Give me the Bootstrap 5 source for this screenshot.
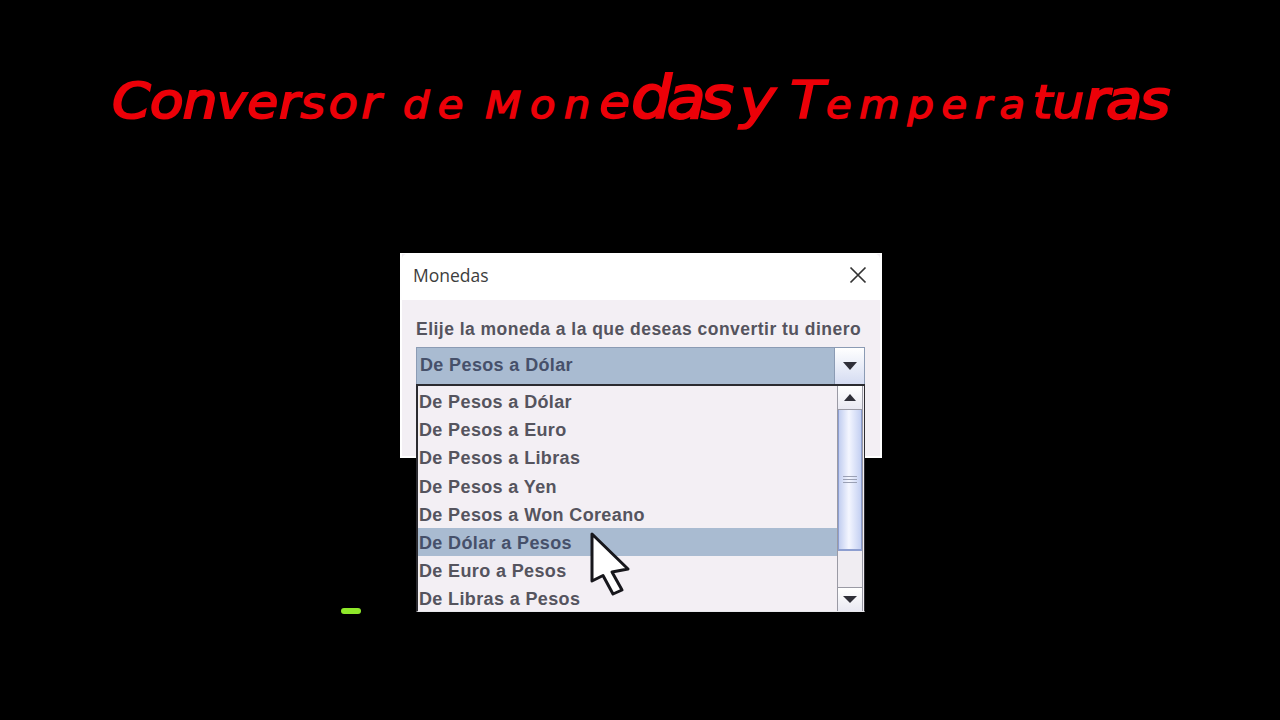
<!DOCTYPE html>
<html lang="es">
<head>
<meta charset="utf-8">
<title>Conversor</title>
<link href="https://cdn.jsdelivr.net/npm/bootstrap@5.3.0/dist/css/bootstrap.min.css" rel="stylesheet">
<style>
html,body{height:720px;overflow:hidden;background:#000;}
.stage{height:720px;position:relative;}
.headline{font-family:"DejaVu Sans",sans-serif;font-style:oblique;font-weight:400;-webkit-text-stroke:1.4px #ec0008;color:#ec0008;margin:0;height:253px;padding-top:66px;white-space:nowrap;line-height:64px;font-size:44px;text-align:center;}
.stretch{display:inline-block;transform:scaleX(1.095);transform-origin:center;}
.s1{font-size:50px;letter-spacing:-.5px;-webkit-text-stroke-width:2.2px}.s2{font-size:46px;letter-spacing:.5px;-webkit-text-stroke-width:1.8px}.s3{font-size:44px;letter-spacing:3px}
.s4{font-size:38px;letter-spacing:7.5px;word-spacing:-7px}.s5{font-size:38px;letter-spacing:8px}.s6{font-size:46px;letter-spacing:1px}.s7{font-size:58px;letter-spacing:-4.5px;word-spacing:-4px;-webkit-text-stroke-width:2.2px}
.s8{font-size:56px;letter-spacing:0;word-spacing:-5px;-webkit-text-stroke-width:1.6px}.s9{font-size:52px;letter-spacing:1px;-webkit-text-stroke-width:1.6px}.s10{font-size:38px;letter-spacing:7px}.s11{font-size:46px;letter-spacing:0;-webkit-text-stroke-width:1.6px}.s12{font-size:54px;letter-spacing:-2.5px;-webkit-text-stroke-width:2.2px}
.dlg{width:482px;height:205px;margin:0 0 0 400px;background:#f3eff4;border:2px solid #fff;border-top-width:1px;border-radius:0;position:relative;color:#55545e;font-family:"Liberation Sans",sans-serif;}
.dlg-top{height:46px;background:#fff;border:0;border-radius:0;padding:0 12px 3px 11px;font-family:"Open Sans",sans-serif;font-size:17.5px;color:#3d3d3d;}
.dlg-close{width:20px;height:20px;color:#333;margin-bottom:1px;}
.dlg-body{padding:0;}
.prompt{font-weight:700;font-size:17.5px;letter-spacing:.47px;margin:19px 0 8px 14px;line-height:20px;white-space:nowrap;}
.combo{width:449px;height:38px;margin-left:14px;background:#a9bbd1;border:1px solid #8b9bb4;}
.combo-text{font-weight:700;font-size:18px;letter-spacing:.37px;padding:0 0 2px 3px;color:#46506a;}
.combo-btn{width:30px;height:100%;background:linear-gradient(#fff,#d5dcf2);border-left:1px solid #8b9bb4;}
.tri{display:block;}
.popup{position:absolute;left:14px;top:130px;width:449px;height:228px;background:#f3eff4;border:1px solid #2b2b30;border-top-width:2px;border-bottom:1px solid #e8e8ec;border-left-width:2px;z-index:2;}
.rows{width:419px;padding-top:1px;}
.rows .list-group-item{background:transparent;border:0;border-radius:0;height:28.2px;line-height:28.2px;padding:1px 0 0 1px;font-weight:700;font-size:18px;letter-spacing:.37px;color:#55545e;white-space:nowrap;}
.rows .list-group-item.picked{background:#a9bbd1;color:#46506a;}
.sbar{width:26px;border-left:1px solid #9a9aa4;border-right:1px solid #9a9aa4;background:#f0edf2;}
.sbtn{height:24px;background:linear-gradient(#fff,#e9e9f2);border-bottom:1px solid #9a9aa4;}
.sbtn-low{height:24px;border-top:1px solid #9a9aa4;border-bottom:0;margin-top:auto;}
.thumb{height:141px;background:linear-gradient(90deg,#c2cef0,#f4f6ff 45%,#c4d0f2);border:1px solid #8d9ed0;border-width:0 1px 2px 1px;}
.grip{width:14px;height:7px;border-top:1px solid #9aa0b4;border-bottom:1px solid #9aa0b4;position:relative;}
.grip::after{content:"";position:absolute;left:0;right:0;top:2px;height:1px;background:#9aa0b4;}
.pointer{position:absolute;left:588px;top:531px;width:44px;height:68px;z-index:3;}
.dash{position:absolute;left:341px;top:608px;width:20px;height:6px;background:#8fe82a;border-radius:3px;}
</style>
</head>
<body>
<div class="stage">
  <h1 class="headline"><span class="stretch"><span class="s1">Con</span><span class="s2">ver</span><span class="s3">sor </span><span class="s4">de </span><span class="s5">Mon</span><span class="s6">e</span><span class="s7">das </span><span class="s8">y </span><span class="s9">T</span><span class="s10">empera</span><span class="s11">tu</span><span class="s12">ras</span></span></h1>

  <div class="card dlg">
    <div class="card-header dlg-top d-flex align-items-center justify-content-between">
      <span>Monedas</span>
      <svg class="dlg-close" viewBox="0 0 20 20" fill="none" stroke="currentColor" stroke-width="1.7"><path d="M2.5 2.5 17.5 17.5M17.5 2.5 2.5 17.5"/></svg>
    </div>
    <div class="card-body dlg-body">
      <p class="prompt">Elije la moneda a la que deseas convertir tu dinero</p>
      <div class="combo d-flex align-items-center justify-content-between">
        <span class="combo-text">De Pesos a Dólar</span>
        <span class="combo-btn d-flex align-items-center justify-content-center">
          <svg class="tri" width="14" height="8" viewBox="0 0 14 8"><path d="M0 0H14L7 8Z" fill="#2f2f38"/></svg>
        </span>
      </div>
    </div>
    <div class="popup d-flex">
      <div class="list-group rows">
        <div class="list-group-item">De Pesos a Dólar</div>
        <div class="list-group-item">De Pesos a Euro</div>
        <div class="list-group-item">De Pesos a Libras</div>
        <div class="list-group-item">De Pesos a Yen</div>
        <div class="list-group-item">De Pesos a Won Coreano</div>
        <div class="list-group-item picked">De Dólar a Pesos</div>
        <div class="list-group-item">De Euro a Pesos</div>
        <div class="list-group-item">De Libras a Pesos</div>
      </div>
      <div class="sbar d-flex flex-column">
        <div class="sbtn d-flex align-items-center justify-content-center">
          <svg width="12" height="7" viewBox="0 0 12 7"><path d="M0 7H12L6 0Z" fill="#2f2f38"/></svg>
        </div>
        <div class="thumb d-flex align-items-center justify-content-center"><div class="grip"></div></div>
        <div class="sbtn sbtn-low d-flex align-items-center justify-content-center">
          <svg width="14" height="7" viewBox="0 0 14 7"><path d="M0 0H14L7 7Z" fill="#2f2f38"/></svg>
        </div>
      </div>
    </div>
  </div>

  <svg class="pointer" viewBox="0 0 44 68"><path d="M4 3V50L15 44.5 25 63 34 59 24 41 40 38Z" fill="#fff" stroke="#17171c" stroke-width="3" stroke-linejoin="round"/></svg>
  <div class="dash"></div>
</div>
<script src="https://cdn.jsdelivr.net/npm/bootstrap@5.3.0/dist/js/bootstrap.bundle.min.js"></script>
</body>
</html>
